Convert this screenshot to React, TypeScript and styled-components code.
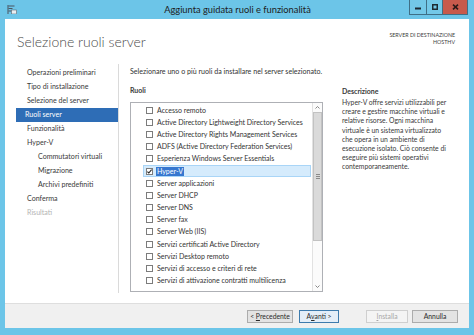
import React from "react";
import styled, { createGlobalStyle } from "styled-components";

const GlobalStyle = createGlobalStyle`
  html, body { margin: 0; padding: 0; }
  body {
    background: #6cc5e8;
    font-family: Lato, "Noto Sans", "Open Sans", sans-serif;
    -webkit-font-smoothing: antialiased;
  }
  * { box-sizing: border-box; }
`;

const Window = styled.div`
  width: 474px;
  height: 335px;
  background: #6cc5e8;
  display: flex;
  flex-direction: column;
  overflow: hidden;
`;

const TitleBar = styled.div`
  height: 19px;
  flex: none;
  display: grid;
  grid-template-columns: 1fr auto 1fr;
  align-items: start;
  padding: 0 6px 0 7px;
`;

const AppIcon = styled.svg`
  margin-top: 5px;
  display: block;
`;

const TitleText = styled.div`
  font-size: 9.3px;
  line-height: 20px;
  color: #1c1c1c;
  white-space: nowrap;
`;

const WinButtons = styled.div`
  justify-self: end;
  display: flex;
  height: 15px;
  border: 1px solid #3f6f86;
  border-top: none;
`;

const WinButton = styled.div<{ $w: number; $close?: boolean }>`
  width: ${(p) => p.$w}px;
  height: 100%;
  display: flex;
  align-items: center;
  justify-content: center;
  background: ${(p) => (p.$close ? "#c75a4c" : "#73c8e8")};
  & + & {
    border-left: 1px solid #3f6f86;
  }
`;

const Client = styled.div`
  flex: 1;
  margin: 0 5px 7px 5px;
  background: #ffffff;
  display: flex;
  flex-direction: column;
  min-height: 0;
`;

const Header = styled.div`
  height: 45px;
  flex: none;
  display: flex;
  justify-content: space-between;
  align-items: flex-start;
  padding: 0 14px 0 12px;
`;

const PageTitle = styled.div`
  margin-top: 13px;
  font-size: 14px;
  line-height: 20px;
  font-weight: 300;
  color: #4b4b4b;
`;

const Destination = styled.div`
  margin-top: 13px;
  text-align: right;
  font-size: 5.3px;
  line-height: 7px;
  color: #3c3c3c;
  text-transform: uppercase;
`;

const Body = styled.div`
  flex: 1;
  display: flex;
  padding-bottom: 10px;
  min-height: 0;
`;

const Nav = styled.div`
  width: 114px;
  flex: none;
  border-right: 1px solid #dadada;
  padding: 2px 0 0 11px;
  display: flex;
  flex-direction: column;
`;

const NavItem = styled.div<{ $level?: number; $active?: boolean; $disabled?: boolean }>`
  height: 14px;
  line-height: 14px;
  font-size: 7.1px;
  white-space: nowrap;
  padding-left: ${(p) => (p.$active ? 9 : 11 + (p.$level ?? 0) * 11)}px;
  background: ${(p) => (p.$active ? "#2e6db6" : "transparent")};
  color: ${(p) => (p.$active ? "#ffffff" : p.$disabled ? "#b4b4b4" : "#3a3a3a")};
`;

const Main = styled.div`
  flex: 1;
  display: flex;
  padding-left: 11px;
  min-width: 0;
`;

const RolesColumn = styled.div`
  width: 193px;
  flex: none;
  display: flex;
  flex-direction: column;
`;

const Intro = styled.div`
  margin-top: 3px;
  font-size: 7.1px;
  line-height: 10px;
  color: #333;
  white-space: nowrap;
`;

const SectionLabel = styled.div<{ $top: number }>`
  margin-top: ${(p) => p.$top}px;
  font-size: 7px;
  line-height: 10px;
  font-weight: 700;
  color: #3a3a3a;
`;

const ListBox = styled.div`
  margin-top: 7px;
  height: 190px;
  border: 1px solid #aeb0b5;
  display: flex;
  background: #fff;
`;

const Rows = styled.div`
  flex: 1;
  padding: 1px 1px 0 12px;
  display: flex;
  flex-direction: column;
`;

const Row = styled.div<{ $selected?: boolean }>`
  height: 12.2px;
  display: flex;
  align-items: center;
  gap: 4px;
  padding-left: 3px;
  font-size: 7px;
  color: #333;
  white-space: nowrap;
  background: ${(p) => (p.$selected ? "#d5ebfc" : "transparent")};
  outline: ${(p) => (p.$selected ? "1px solid #a9d5f7" : "none")};
  outline-offset: -1px;
`;

const CheckBox = styled.span`
  width: 7px;
  height: 7px;
  flex: none;
  border: 1px solid #7c7c7c;
  background: #fff;
  display: flex;
  align-items: center;
  justify-content: center;
`;

const RowLabel = styled.span<{ $focus?: boolean }>`
  line-height: 9px;
  padding: 0 1px;
  margin-left: -1px;
  background: ${(p) => (p.$focus ? "#3677cf" : "transparent")};
  color: ${(p) => (p.$focus ? "#ffffff" : "inherit")};
`;

const ScrollBar = styled.div`
  width: 10px;
  flex: none;
  border-left: 1px solid #e2e2e2;
  display: flex;
  flex-direction: column;
  background: #fbfbfb;
`;

const ScrollArrow = styled.div`
  height: 9px;
  flex: none;
  display: flex;
  align-items: center;
  justify-content: center;
`;

const Thumb = styled.div`
  height: 129px;
  flex: none;
  background: #dadada;
  border: 1px solid #c2c2c2;
  display: flex;
  align-items: center;
  justify-content: center;
`;

const Track = styled.div`
  flex: 1;
`;

const DescColumn = styled.div`
  margin-left: 19px;
  width: 120px;
  display: flex;
  flex-direction: column;
`;

const DescText = styled.div`
  margin-top: 2px;
  font-size: 6.8px;
  line-height: 9.2px;
  color: #3a3a3a;
  white-space: nowrap;
`;

const DescLine = styled.div``;

const Footer = styled.div`
  height: 25px;
  flex: none;
  background: #f0f0f0;
  border-top: 1px solid #dedede;
  display: flex;
  align-items: center;
  justify-content: flex-end;
  padding-right: 11px;
`;

const Button = styled.div<{ $w: number; $gap: number; $variant?: "primary" | "disabled" }>`
  width: ${(p) => p.$w}px;
  height: 13px;
  margin-left: ${(p) => p.$gap}px;
  display: flex;
  align-items: center;
  justify-content: center;
  font-size: 6.8px;
  white-space: nowrap;
  border: 1px solid
    ${(p) => (p.$variant === "primary" ? "#3d7bad" : p.$variant === "disabled" ? "#cfcfcf" : "#acacac")};
  background: ${(p) =>
    p.$variant === "primary" ? "#e3eef8" : p.$variant === "disabled" ? "#f4f4f4" : "#e3e3e3"};
  color: ${(p) => (p.$variant === "disabled" ? "#a8a8a8" : "#2a2a2a")};
  u {
    text-decoration: underline;
    text-underline-offset: 1px;
  }
`;

const roles = [
  "Accesso remoto",
  "Active Directory Lightweight Directory Services",
  "Active Directory Rights Management Services",
  "ADFS (Active Directory Federation Services)",
  "Esperienza Windows Server Essentials",
  "Hyper-V",
  "Server applicazioni",
  "Server DHCP",
  "Server DNS",
  "Server fax",
  "Server Web (IIS)",
  "Servizi certificati Active Directory",
  "Servizi Desktop remoto",
  "Servizi di accesso e criteri di rete",
  "Servizi di attivazione contratti multilicenza",
];

const descLines = [
  "Hyper-V offre servizi utilizzabili per",
  "creare e gestire macchine virtuali e",
  "relative risorse. Ogni macchina",
  "virtuale è un sistema virtualizzato",
  "che opera in un ambiente di",
  "esecuzione isolato. Ciò consente di",
  "eseguire più sistemi operativi",
  "contemporaneamente.",
];

const navItems: { label: string; level?: number; active?: boolean; disabled?: boolean }[] = [
  { label: "Operazioni preliminari" },
  { label: "Tipo di installazione" },
  { label: "Selezione del server" },
  { label: "Ruoli server", active: true },
  { label: "Funzionalità" },
  { label: "Hyper-V" },
  { label: "Commutatori virtuali", level: 1 },
  { label: "Migrazione", level: 1 },
  { label: "Archivi predefiniti", level: 1 },
  { label: "Conferma" },
  { label: "Risultati", disabled: true },
];

const Chevron = ({ up }: { up?: boolean }) => (
  <svg width="5" height="3" viewBox="0 0 5 3">
    <path
      d={up ? "M0.5 2.5 L2.5 0.5 L4.5 2.5" : "M0.5 0.5 L2.5 2.5 L4.5 0.5"}
      fill="none"
      stroke="#7a7a7a"
      strokeWidth="0.9"
    />
  </svg>
);

export default function App() {
  return (
    <>
      <GlobalStyle />
      <Window>
        <TitleBar>
          <AppIcon width="10" height="9" viewBox="0 0 10 9">
            <rect x="0.5" y="0" width="1" height="9" fill="#4a5560" />
            <rect x="1.5" y="0.5" width="6" height="1" fill="#4a5560" />
            <rect x="1.5" y="3" width="4" height="1" fill="#4a5560" />
            <rect x="1.5" y="5.5" width="3" height="1" fill="#4a5560" />
            <rect x="4.5" y="5" width="5" height="4" fill="#e8eef2" stroke="#5a6670" strokeWidth="0.6" />
          </AppIcon>
          <TitleText>Aggiunta guidata ruoli e funzionalità</TitleText>
          <WinButtons>
            <WinButton $w={16}>
              <svg width="6" height="6" viewBox="0 0 6 6">
                <rect x="0" y="3.5" width="6" height="2" fill="#1d2a33" />
              </svg>
            </WinButton>
            <WinButton $w={16}>
              <svg width="6" height="6" viewBox="0 0 6 6">
                <rect x="0.75" y="0.75" width="4.5" height="4.5" fill="none" stroke="#1d2a33" strokeWidth="1.5" />
              </svg>
            </WinButton>
            <WinButton $w={25} $close>
              <svg width="7" height="6" viewBox="0 0 7 6">
                <path d="M1 0.6 L6 5.4 M6 0.6 L1 5.4" stroke="#2a1a18" strokeWidth="1.6" />
              </svg>
            </WinButton>
          </WinButtons>
        </TitleBar>

        <Client>
          <Header>
            <PageTitle>Selezione ruoli server</PageTitle>
            <Destination>
              <div>Server di destinazione</div>
              <div>HostHV</div>
            </Destination>
          </Header>

          <Body>
            <Nav>
              {navItems.map((n) => (
                <NavItem key={n.label} $level={n.level} $active={n.active} $disabled={n.disabled}>
                  {n.label}
                </NavItem>
              ))}
            </Nav>

            <Main>
              <RolesColumn>
                <Intro>Selezionare uno o più ruoli da installare nel server selezionato.</Intro>
                <SectionLabel $top={8}>Ruoli</SectionLabel>
                <ListBox>
                  <Rows>
                    {roles.map((r) => {
                      const sel = r === "Hyper-V";
                      return (
                        <Row key={r} $selected={sel}>
                          <CheckBox>
                            {sel && (
                              <svg width="5" height="5" viewBox="0 0 5 5">
                                <path d="M0.4 2.6 L1.8 4 L4.6 0.6" fill="none" stroke="#222" strokeWidth="1.1" />
                              </svg>
                            )}
                          </CheckBox>
                          <RowLabel $focus={sel}>{r}</RowLabel>
                        </Row>
                      );
                    })}
                  </Rows>
                  <ScrollBar>
                    <ScrollArrow>
                      <Chevron up />
                    </ScrollArrow>
                    <Thumb>
                      <svg width="4" height="5" viewBox="0 0 4 5">
                        <rect x="0" y="0" width="4" height="1" fill="#8a8a8a" />
                        <rect x="0" y="2" width="4" height="1" fill="#8a8a8a" />
                        <rect x="0" y="4" width="4" height="1" fill="#8a8a8a" />
                      </svg>
                    </Thumb>
                    <Track />
                    <ScrollArrow>
                      <Chevron />
                    </ScrollArrow>
                  </ScrollBar>
                </ListBox>
              </RolesColumn>

              <DescColumn>
                <SectionLabel $top={22}>Descrizione</SectionLabel>
                <DescText>
                  {descLines.map((l) => (
                    <DescLine key={l}>{l}</DescLine>
                  ))}
                </DescText>
              </DescColumn>
            </Main>
          </Body>

          <Footer>
            <Button $w={46} $gap={0}>
              &lt;&nbsp;<u>P</u>recedente
            </Button>
            <Button $w={40} $gap={6} $variant="primary">
              A<u>v</u>anti &gt;
            </Button>
            <Button $w={42} $gap={27} $variant="disabled">
              <u>I</u>nstalla
            </Button>
            <Button $w={46} $gap={4}>
              Annulla
            </Button>
          </Footer>
        </Client>
      </Window>
    </>
  );
}
